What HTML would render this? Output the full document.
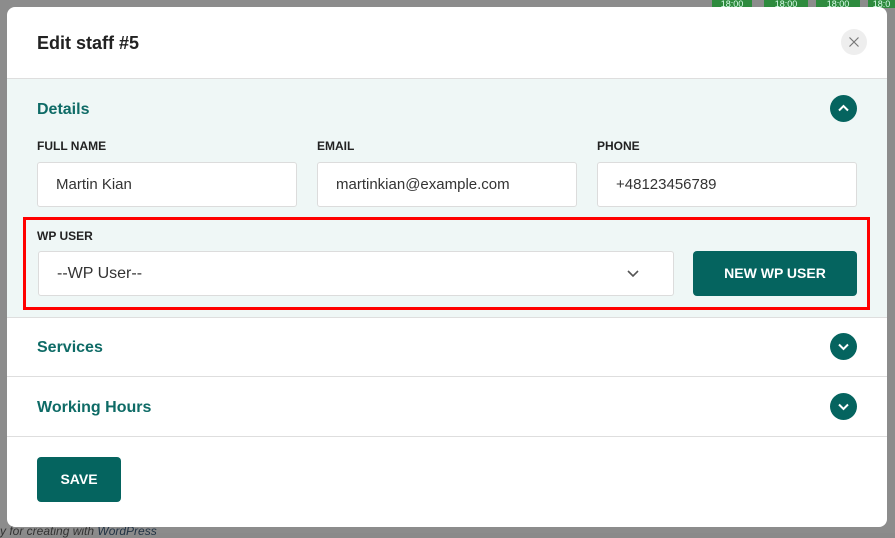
<!DOCTYPE html>
<html><head><style>
*{box-sizing:border-box;margin:0;padding:0}
body{width:895px;height:533px;background:#8a8a8a;font-family:"Liberation Sans",sans-serif;position:relative;overflow:hidden}
.a{position:absolute}
.m{left:7px;top:7px;width:880px;height:520px;background:#fff;border-radius:8px;overflow:hidden}
.lbl{font-size:12px;font-weight:bold;color:#222}
.inp{background:#fff;border:1px solid #dcdcdc;border-radius:3px;height:45px;font-size:15px;color:#333;padding:13px 18px}
.sec{font-size:16px;font-weight:bold;color:#0e6b66}
.circ{width:27px;height:27px;border-radius:50%;background:#05645f}
.btn{background:#05645f;color:#fff;font-weight:bold;font-size:14px;border-radius:4px;text-align:center}
.line{height:1px;background:#dedede;left:0;width:880px}
.t{font-size:9px;color:#dfe;text-align:center;line-height:8px}
</style></head><body>
<div class="a" style="left:0;top:0;width:895px;height:533px;background:#8c8c8c"></div>
<div class="a t" style="left:712px;top:0;width:40px;height:8px;background:#2e8b3e">18:00</div>
<div class="a t" style="left:764px;top:0;width:44px;height:8px;background:#2e8b3e">18:00</div>
<div class="a t" style="left:816px;top:0;width:44px;height:8px;background:#2e8b3e">18:00</div>
<div class="a t" style="left:868px;top:0;width:27px;height:8px;background:#2e8b3e">18:0</div>
<div class="a" style="left:0;top:524px;font-size:12px;font-style:italic;color:#333">y for creating with <span style="color:#234">WordPress</span></div>
<div class="a m">
 <div class="a" style="left:30px;top:26px;font-size:18px;font-weight:bold;color:#222">Edit staff #5</div>
 <div class="a" style="left:834px;top:22px;width:26px;height:26px;border-radius:50%;background:#eee"><svg width="26" height="26"><path d="M8.5 8.5l9 9M17.5 8.5l-9 9" stroke="#777" stroke-width="1.2"/></svg></div>
 <div class="a line" style="top:71px"></div>
 <div class="a" style="left:0;top:72px;width:880px;height:238px;background:#eff7f6"></div>
 <div class="a sec" style="left:30px;top:94px">Details</div>
 <div class="a circ" style="left:823px;top:88px"><svg width="27" height="27"><path d="M9 15.5l4.5-4.5 4.5 4.5" stroke="#fff" stroke-width="2" fill="none"/></svg></div>
 <div class="a lbl" style="left:30px;top:132px">FULL NAME</div>
 <div class="a lbl" style="left:310px;top:132px">EMAIL</div>
 <div class="a lbl" style="left:590px;top:132px">PHONE</div>
 <div class="a inp" style="left:30px;top:155px;width:260px">Martin Kian</div>
 <div class="a inp" style="left:310px;top:155px;width:260px">martinkian@example.com</div>
 <div class="a inp" style="left:590px;top:155px;width:260px">+48123456789</div>
 <div class="a" style="left:16px;top:210px;width:847px;height:93px;border:3px solid #f00"></div>
 <div class="a lbl" style="left:30px;top:222px">WP USER</div>
 <div class="a inp" style="left:31px;top:244px;width:636px;font-size:16px">--WP User--</div>
 <svg class="a" style="left:619px;top:261px" width="14" height="10"><path d="M2 3l5 5 5-5" stroke="#555" stroke-width="1.6" fill="none"/></svg>
 <div class="a btn" style="left:686px;top:244px;width:164px;height:45px;line-height:45px">NEW WP USER</div>
 <div class="a line" style="top:310px"></div>
 <div class="a sec" style="left:30px;top:332px">Services</div>
 <div class="a circ" style="left:823px;top:326px"><svg width="27" height="27"><path d="M9 11.5l4.5 4.5 4.5-4.5" stroke="#fff" stroke-width="2" fill="none"/></svg></div>
 <div class="a line" style="top:369px"></div>
 <div class="a sec" style="left:30px;top:392px">Working Hours</div>
 <div class="a circ" style="left:823px;top:386px"><svg width="27" height="27"><path d="M9 11.5l4.5 4.5 4.5-4.5" stroke="#fff" stroke-width="2" fill="none"/></svg></div>
 <div class="a line" style="top:429px"></div>
 <div class="a btn" style="left:30px;top:450px;width:84px;height:45px;line-height:45px">SAVE</div>
</div>
</body></html>
